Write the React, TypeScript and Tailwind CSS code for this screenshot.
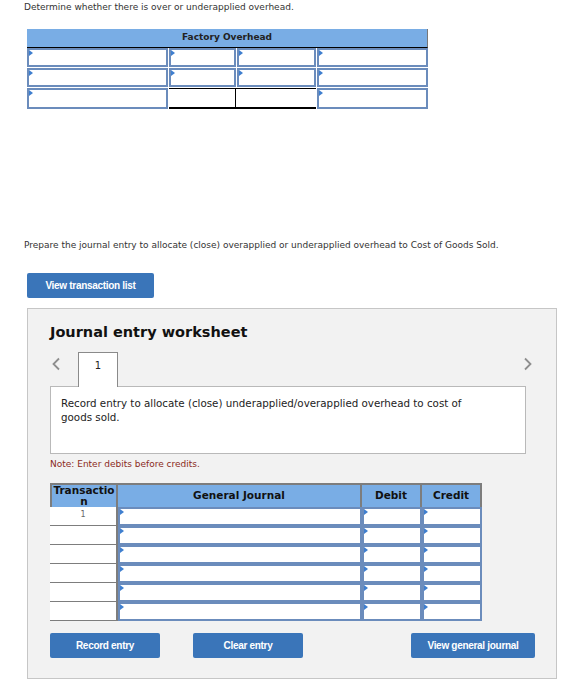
import React from "react";

// small input cell with the blue arrow marker in the corner
function Cell({ className = "" }: { className?: string }) {
  return (
    <div className={"relative bg-white border-2 border-[#6b8cbc] " + className}>
      <span className="absolute left-0 top-0 w-0 h-0 border-y-[3px] border-y-transparent border-l-[4px] border-l-[#3f7fcf]" />
    </div>
  );
}

function Button({ label, className = "" }: { label: string; className?: string }) {
  return (
    <button
      className={
        "h-[25px] rounded-[2px] bg-[#3a75b9] text-white font-bold text-[10px] tracking-[-0.3px] font-['Liberation_Sans',Arial,sans-serif] " +
        className
      }
    >
      {label}
    </button>
  );
}

const rows = [1, 2, 3, 4, 5, 6];

export default function App() {
  return (
    <div className="w-[569px] h-[684px] overflow-hidden bg-white font-['DejaVu_Sans',Verdana,sans-serif] text-[#222]">
      <p className="pl-[24px] pt-[2px] text-[9px] leading-[11px] text-[#333]">
        Determine whether there is over or underapplied overhead.
      </p>

      {/* Factory Overhead T-account */}
      <div className="ml-[27px] mt-[16px] w-[401px]">
        <div className="h-[19px] bg-[#79ade5] border-b border-black border-r border-r-[#777] flex items-center justify-center text-[9px] font-bold text-[#222]">
          Factory Overhead
        </div>
        <div className="flex flex-col gap-[1px]">
          <div className="flex gap-[1px] h-[19px]">
            <Cell className="w-[141px]" />
            <Cell className="w-[67px]" />
            <Cell className="w-[79px]" />
            <Cell className="w-[111px]" />
          </div>
          <div className="flex gap-[1px] h-[19px]">
            <Cell className="w-[141px]" />
            <Cell className="w-[67px]" />
            <Cell className="w-[79px]" />
            <Cell className="w-[111px]" />
          </div>
          <div className="flex gap-[1px] h-[21px]">
            <Cell className="w-[141px]" />
            <div className="w-[148px] flex border-t border-black border-b-[2px] border-b-black">
              <div className="w-[67px] border-r border-black" />
              <div className="flex-1" />
            </div>
            <Cell className="w-[111px]" />
          </div>
        </div>
      </div>

      <p className="pl-[24px] mt-[131px] text-[9px] leading-[11px] text-[#333]">
        Prepare the journal entry to allocate (close) overapplied or underapplied overhead to Cost of Goods Sold.
      </p>

      <Button label="View transaction list" className="ml-[27px] mt-[22px] w-[127px] h-[24px] block" />

      {/* worksheet panel */}
      <div className="ml-[27px] mt-[10px] w-[530px] h-[371px] border border-[#c6c6c6] bg-[#f2f2f2]">
        <h2 className="ml-[22px] mt-[14px] text-[14.5px] leading-[18px] font-bold text-[#111]">
          Journal entry worksheet
        </h2>

        <div className="flex ml-[22px] mt-[11px] w-[483px] h-[34px]">
          <svg width="10" height="14" viewBox="0 0 10 14" className="mt-[5px] ml-[1px]">
            <path d="M8 1.5 L2.5 7 L8 12.5" fill="none" stroke="#8e8e8e" strokeWidth="1.8" />
          </svg>
          <div className="ml-[17px] w-[40px] h-[35px] bg-white border border-b-0 border-[#8a8a8a] flex justify-center pt-[7px] text-[10px] leading-[12px] text-[#222] relative z-10">
            1
          </div>
          <svg width="10" height="14" viewBox="0 0 10 14" className="mt-[5px] ml-auto">
            <path d="M2 1.5 L7.5 7 L2 12.5" fill="none" stroke="#8e8e8e" strokeWidth="1.8" />
          </svg>
        </div>

        <div className="ml-[22px] w-[476px] h-[68px] bg-white border border-[#b9b9b9] px-[10px] pt-[9px] text-[10.3px] leading-[14px] text-[#222]">
          <p className="w-[415px]">
            Record entry to allocate (close) underapplied/overapplied overhead to cost of goods sold.
          </p>
        </div>

        <p className="ml-[22px] mt-[5px] text-[9px] leading-[11px] text-[#8b2a1c]">
          Note: Enter debits before credits.
        </p>

        {/* journal table */}
        <div className="ml-[22px] mt-[13px] w-[432px]">
          <div className="flex h-[24px] bg-[#79ade5] border-t-2 border-[#7d7d7d] text-[10.5px] font-bold text-[#111]">
            <div className="w-[68px] border-l-2 border-r-2 border-[#7d7d7d] text-center leading-[11px] break-all">
              Transaction
            </div>
            <div className="w-[244px] border-r-2 border-[#7d7d7d] flex items-center justify-center">General Journal</div>
            <div className="w-[60px] border-r-2 border-[#7d7d7d] flex items-center justify-center">Debit</div>
            <div className="w-[60px] border-r-2 border-[#7d7d7d] flex items-center justify-center">Credit</div>
          </div>
          {rows.map((r) => (
            <div key={r} className="flex h-[19px] bg-[#808080]">
              <div className="w-[68px] bg-white border-r-2 border-b border-[#7d7d7d] text-center text-[8px] leading-[16px] text-[#666]">
                {r === 1 ? "1" : ""}
              </div>
              <Cell className="w-[244px]" />
              <Cell className="w-[60px]" />
              <Cell className="w-[60px]" />
            </div>
          ))}
        </div>

        <div className="flex mt-[12px]">
          <Button label="Record entry" className="ml-[22px] w-[110px]" />
          <Button label="Clear entry" className="ml-[33px] w-[110px]" />
          <Button label="View general journal" className="ml-[108px] w-[124px]" />
        </div>
      </div>
    </div>
  );
}
